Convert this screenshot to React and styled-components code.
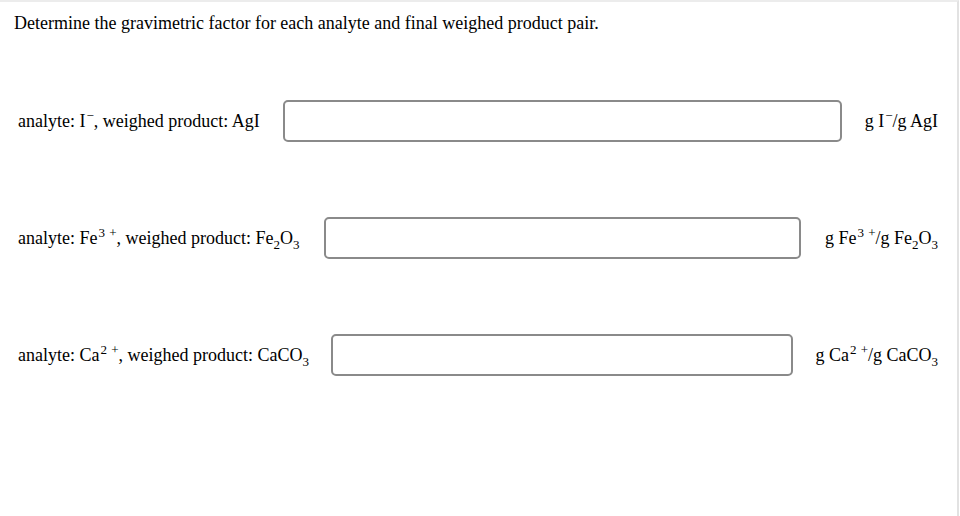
import React from "react";
import styled, { createGlobalStyle } from "styled-components";

const GlobalStyle = createGlobalStyle`
  html, body {
    margin: 0;
    padding: 0;
    background: #ffffff;
  }
  body {
    font-family: "Liberation Serif", "Times New Roman", serif;
    color: #000;
  }
`;

const Page = styled.div`
  box-sizing: border-box;
  width: 959px;
  height: 516px;
  border-top: 2px solid #ececec;
  border-right: 2px solid #e2e2e2;
  padding: 11px 19px 0 14px;
`;

const Title = styled.div`
  font-size: 18px;
  line-height: 20px;
`;

const Rows = styled.div`
  display: flex;
  flex-direction: column;
  gap: 75px;
  margin-top: 67px;
  padding-left: 4px;
`;

const Row = styled.div`
  display: flex;
  align-items: center;
  height: 42px;
`;

const Label = styled.span`
  font-size: 18px;
  white-space: nowrap;
`;

const AnswerInput = styled.input`
  box-sizing: border-box;
  flex: 1;
  height: 42px;
  margin: 0 ${(p) => p.$gapRight}px 0 ${(p) => p.$gapLeft}px;
  border: 2px solid #8a8a8a;
  border-radius: 5px;
  background: #fff;
  outline: none;
`;

const Unit = styled.span`
  font-size: 18px;
  white-space: nowrap;
`;

const Sup = styled.sup`
  font-size: 13px;
  line-height: 0;
  vertical-align: 7px;
  margin-left: 1px;
  word-spacing: 1px;
`;

const Sub = styled.sub`
  font-size: 13px;
  line-height: 0;
  vertical-align: -5px;
`;

const rows = [
  {
    label: (
      <>
        analyte: I<Sup>−</Sup>, weighed product: AgI
      </>
    ),
    unit: (
      <>
        g I<Sup>−</Sup>/g AgI
      </>
    ),
    left: 23,
    right: 23,
  },
  {
    label: (
      <>
        analyte: Fe<Sup>3 +</Sup>, weighed product: Fe<Sub>2</Sub>O<Sub>3</Sub>
      </>
    ),
    unit: (
      <>
        g Fe<Sup>3 +</Sup>/g Fe<Sub>2</Sub>O<Sub>3</Sub>
      </>
    ),
    left: 24,
    right: 24,
  },
  {
    label: (
      <>
        analyte: Ca<Sup>2 +</Sup>, weighed product: CaCO<Sub>3</Sub>
      </>
    ),
    unit: (
      <>
        g Ca<Sup>2 +</Sup>/g CaCO<Sub>3</Sub>
      </>
    ),
    left: 22,
    right: 22,
  },
];

export default function App() {
  return (
    <>
      <GlobalStyle />
      <Page>
        <Title>
          Determine the gravimetric factor for each analyte and final weighed
          product pair.
        </Title>
        <Rows>
          {rows.map((row, index) => (
            <Row key={index}>
              <Label>{row.label}</Label>
              <AnswerInput $gapLeft={row.left} $gapRight={row.right} />
              <Unit>{row.unit}</Unit>
            </Row>
          ))}
        </Rows>
      </Page>
    </>
  );
}
